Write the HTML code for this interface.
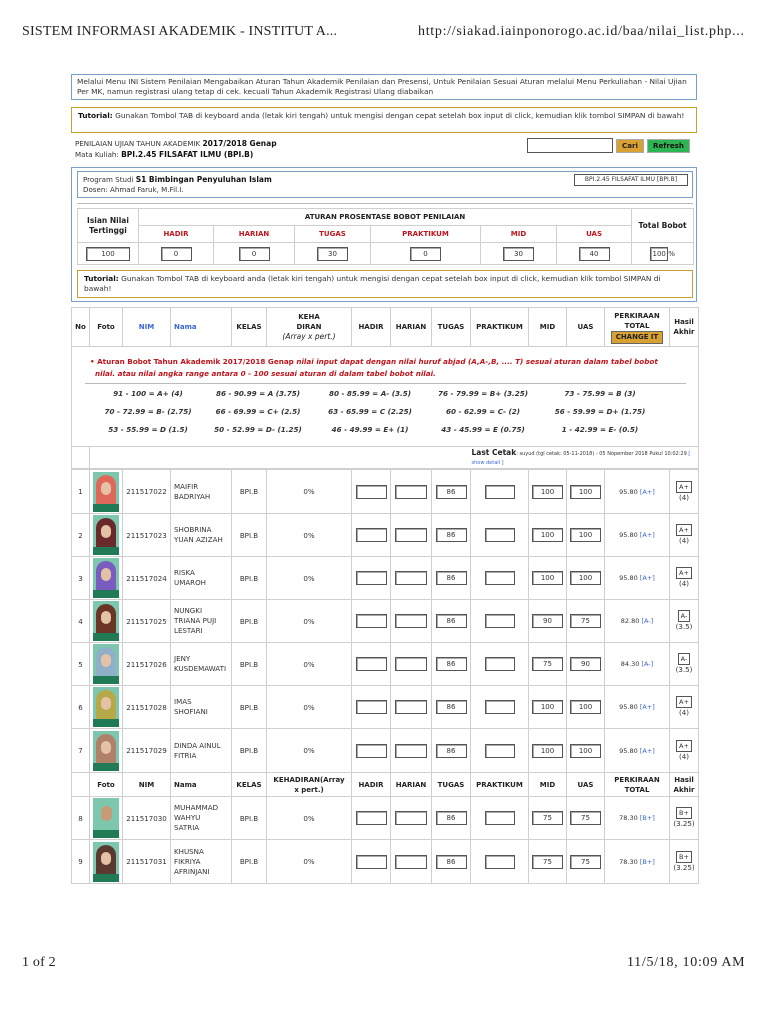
<!DOCTYPE html>
<html><head><meta charset="utf-8"><style>
*{margin:0;padding:0;box-sizing:border-box}
body{width:768px;height:1024px;background:#fff;position:relative;font-family:"DejaVu Sans","Liberation Sans",sans-serif;font-size:7.1px;color:#333;overflow:hidden}
.a{position:absolute}
.ser{font-family:"Liberation Serif",serif;font-size:14px;color:#222;letter-spacing:.2px}
.box{position:absolute;border:1px solid #7a9fc8}
.ybox{position:absolute;border:1px solid #c8a030;padding:3px 6px;line-height:10px;font-size:7.4px}
table{border-collapse:collapse;table-layout:fixed;position:absolute}
td,th{border:1px solid #cfcfcf;text-align:center;vertical-align:middle;overflow:hidden}
th{font-weight:bold;color:#222;font-size:7px;line-height:10px}
.red{color:#c0141c}
.in{display:inline-block;border:1px solid #555;box-shadow:inset 1px 1px 0 #aaa;height:14px;line-height:12px;font-size:7px;text-align:center;vertical-align:middle}
.ph{width:26px;height:40px;margin:0 auto;position:relative;background:#7cc7ae;overflow:hidden}
.ph .hj{position:absolute;left:3px;top:3px;width:20px;height:40px;border-radius:10px 10px 3px 3px}
.ph .fc{position:absolute;left:8px;top:10px;width:10px;height:13px;border-radius:5px;background:#e4c2a6}
.ph .bd{position:absolute;left:0;bottom:0;width:26px;height:8px;background:#1f7a55}
.hs{display:inline-block;border:1px solid #555;padding:0 2px;line-height:10px;font-size:6.5px}
.bl{color:#3a66d6}
.lg{position:absolute;font-weight:bold;font-style:italic;color:#333;font-size:7.2px;transform:translateX(-50%);white-space:nowrap}
</style></head><body>
<div class="a ser" style="left:22px;top:24px">SISTEM INFORMASI AKADEMIK - INSTITUT A...</div>
<div class="a ser" style="left:418px;top:24px;letter-spacing:.7px">http://siakad.iainponorogo.ac.id/baa/nilai_list.php...</div>

<div class="box" style="left:71px;top:74px;width:626px;height:26px;padding:2px 5px;line-height:10px;font-size:7.4px">Melalui Menu INI Sistem Penilaian Mengabaikan Aturan Tahun Akademik Penilaian dan Presensi, Untuk Penilaian Sesuai Aturan melalui Menu Perkuliahan - Nilai Ujian Per MK, namun registrasi ulang tetap di cek. kecuali Tahun Akademik Registrasi Ulang diabaikan</div>
<div class="ybox" style="left:71px;top:107px;width:626px;height:26px"><b style="color:#111">Tutorial:</b> Gunakan Tombol TAB di keyboard anda (letak kiri tengah) untuk mengisi dengan cepat setelah box input di click, kemudian klik tombol SIMPAN di bawah!</div>
<div class="a" style="left:75px;top:138px;line-height:11px">PENILAIAN UJIAN TAHUN AKADEMIK <b style="color:#111;font-size:7.5px">2017/2018 Genap</b><br>Mata Kuliah: <b style="color:#111;font-size:7.5px">BPI.2.45 FILSAFAT ILMU (BPI.B)</b></div>
<div class="a" style="left:527px;top:138px;width:86px;height:15px;border:1px solid #555"></div>
<div class="a" style="left:616px;top:139px;width:28px;height:14px;background:#d9a032;border:1px solid #aaa;font-weight:bold;text-align:center;line-height:12px;color:#222">Cari</div>
<div class="a" style="left:647px;top:139px;width:43px;height:14px;background:#2cb552;border:1px solid #aaa;font-weight:bold;text-align:center;line-height:12px;color:#111">Refresh</div>

<div class="box" style="left:71px;top:167px;width:626px;height:135px"></div>
<div class="box" style="left:77px;top:171px;width:616px;height:27px;padding:3px 5px;line-height:10px">Program Studi <b style="color:#111;font-size:7.5px">S1 Bimbingan Penyuluhan Islam</b><br>Dosen: Ahmad Faruk, M.Fil.I.</div>
<div class="a" style="left:574px;top:174px;width:114px;height:12px;border:1px solid #555;font-size:6px;line-height:10px;text-align:center;white-space:nowrap">BPI.2.45 FILSAFAT ILMU [BPI.B]</div>
<div class="a" style="left:77px;top:203px;width:616px;border-top:1px solid #bbb"></div>
<table style="left:77px;top:208px;width:616px">
<colgroup><col style="width:61px"><col style="width:75px"><col style="width:81px"><col style="width:76px"><col style="width:110px"><col style="width:76px"><col style="width:75px"><col style="width:62px"></colgroup>
<tr style="height:17px"><th rowspan="2" style="font-size:7.5px">Isian Nilai<br>Tertinggi</th><th colspan="6">ATURAN PROSENTASE BOBOT PENILAIAN</th><th rowspan="2" style="font-size:7.5px">Total Bobot</th></tr>
<tr style="height:17px"><th class="red">HADIR</th><th class="red">HARIAN</th><th class="red">TUGAS</th><th class="red">PRAKTIKUM</th><th class="red">MID</th><th class="red">UAS</th></tr>
<tr style="height:22px"><td><span class="in" style="width:44px">100</span></td><td><span class="in" style="width:31px">0</span></td><td><span class="in" style="width:31px">0</span></td><td><span class="in" style="width:31px">30</span></td><td><span class="in" style="width:31px">0</span></td><td><span class="in" style="width:31px">30</span></td><td><span class="in" style="width:31px">40</span></td><td><span class="in" style="width:18px">100</span>%</td></tr>
</table>
<div class="ybox" style="left:77px;top:270px;width:616px;height:28px"><b style="color:#111">Tutorial:</b> Gunakan Tombol TAB di keyboard anda (letak kiri tengah) untuk mengisi dengan cepat setelah box input di click, kemudian klik tombol SIMPAN di bawah!</div>

<table style="left:71px;top:307px;width:627px">
<colgroup><col style="width:18px"><col style="width:33px"><col style="width:48px"><col style="width:61px"><col style="width:35px"><col style="width:85px"><col style="width:39px"><col style="width:41px"><col style="width:39px"><col style="width:58px"><col style="width:38px"><col style="width:38px"><col style="width:65px"><col style="width:29px"></colgroup>
<tr style="height:39px"><th>No</th><th>Foto</th><th class="bl">NIM</th><th class="bl" style="text-align:left;padding-left:3px">Nama</th><th>KELAS</th><th>KEHA<br>DIRAN<br><i style="font-weight:normal;font-size:7.5px">(Array x pert.)</i></th><th>HADIR</th><th>HARIAN</th><th>TUGAS</th><th>PRAKTIKUM</th><th>MID</th><th>UAS</th><th>PERKIRAAN<br>TOTAL<br><span style="display:inline-block;background:#d9a032;border:1px solid #666;padding:1px 4px;line-height:9px">CHANGE IT</span></th><th>Hasil<br>Akhir</th></tr>
<tr style="height:100px"><td colspan="14" style="vertical-align:top;text-align:left;position:relative">
<div class="red" style="position:absolute;left:18px;top:9px;width:620px;font-weight:bold;font-style:italic;line-height:12px;font-size:7.2px;white-space:nowrap">• <span style="font-style:normal">Aturan Bobot Tahun Akademik 2017/2018 Genap</span> nilai input dapat dengan nilai huruf abjad (A,A-,B, .... T) sesuai aturan dalam tabel bobot<br>&nbsp;&nbsp;nilai. atau nilai angka range antara 0 - 100 sesuai aturan di dalam tabel bobot nilai.</div>
<div style="position:absolute;left:13px;top:36px;width:601px;border-top:1px solid #bbb"></div>
</td></tr>
<tr style="height:22px"><td></td><td colspan="8" style="border-right:none"></td><td colspan="5" style="text-align:left;padding-left:1px;line-height:8px;border-left:none;white-space:nowrap"><b style="font-size:7.5px;color:#222">Last Cetak</b><span style="font-size:5px">: suyud (tgl cetak: 05-11-2018) - 05 Nopember 2018 Pukul 10:02:29 <span class="bl">[<br>show detail ]</span></span></td></tr>
</table>
<div class="lg" style="left:148px;top:389px">91 - 100 = A+ (4)</div><div class="lg" style="left:258px;top:389px">86 - 90.99 = A (3.75)</div><div class="lg" style="left:370px;top:389px">80 - 85.99 = A- (3.5)</div><div class="lg" style="left:483px;top:389px">76 - 79.99 = B+ (3.25)</div><div class="lg" style="left:600px;top:389px">73 - 75.99 = B (3)</div>
<div class="lg" style="left:148px;top:407px">70 - 72.99 = B- (2.75)</div><div class="lg" style="left:258px;top:407px">66 - 69.99 = C+ (2.5)</div><div class="lg" style="left:370px;top:407px">63 - 65.99 = C (2.25)</div><div class="lg" style="left:483px;top:407px">60 - 62.99 = C- (2)</div><div class="lg" style="left:600px;top:407px">56 - 59.99 = D+ (1.75)</div>
<div class="lg" style="left:148px;top:425px">53 - 55.99 = D (1.5)</div><div class="lg" style="left:258px;top:425px">50 - 52.99 = D- (1.25)</div><div class="lg" style="left:370px;top:425px">46 - 49.99 = E+ (1)</div><div class="lg" style="left:483px;top:425px">43 - 45.99 = E (0.75)</div><div class="lg" style="left:600px;top:425px">1 - 42.99 = E- (0.5)</div>

<table style="left:71px;top:469px;width:627px">
<colgroup><col style="width:18px"><col style="width:33px"><col style="width:48px"><col style="width:61px"><col style="width:35px"><col style="width:85px"><col style="width:39px"><col style="width:41px"><col style="width:39px"><col style="width:58px"><col style="width:38px"><col style="width:38px"><col style="width:65px"><col style="width:29px"></colgroup>
<tr style="height:44px"><td>1</td><td><div class="ph"><div class="hj" style="background:#e0685a"></div><div class="fc"></div><div class="bd"></div></div></td><td>211517022</td><td style="text-align:left;padding-left:3px;line-height:10px">MAIFIR<br>BADRIYAH</td><td>BPI.B</td><td>0%</td><td><span class="in" style="width:31px"></span></td><td><span class="in" style="width:32px"></span></td><td><span class="in" style="width:31px">86</span></td><td><span class="in" style="width:30px"></span></td><td><span class="in" style="width:31px">100</span></td><td><span class="in" style="width:31px">100</span></td><td style="font-size:6.5px">95.80 <span class="bl">[A+]</span></td><td style="line-height:10px"><span class="hs">A+</span><br>(4)</td></tr>
<tr style="height:43px"><td>2</td><td><div class="ph"><div class="hj" style="background:#6a2a2a"></div><div class="fc"></div><div class="bd"></div></div></td><td>211517023</td><td style="text-align:left;padding-left:3px;line-height:10px">SHOBRINA<br>YUAN AZIZAH</td><td>BPI.B</td><td>0%</td><td><span class="in" style="width:31px"></span></td><td><span class="in" style="width:32px"></span></td><td><span class="in" style="width:31px">86</span></td><td><span class="in" style="width:30px"></span></td><td><span class="in" style="width:31px">100</span></td><td><span class="in" style="width:31px">100</span></td><td style="font-size:6.5px">95.80 <span class="bl">[A+]</span></td><td style="line-height:10px"><span class="hs">A+</span><br>(4)</td></tr>
<tr style="height:43px"><td>3</td><td><div class="ph"><div class="hj" style="background:#7a5cc0"></div><div class="fc"></div><div class="bd"></div></div></td><td>211517024</td><td style="text-align:left;padding-left:3px;line-height:10px">RISKA<br>UMAROH</td><td>BPI.B</td><td>0%</td><td><span class="in" style="width:31px"></span></td><td><span class="in" style="width:32px"></span></td><td><span class="in" style="width:31px">86</span></td><td><span class="in" style="width:30px"></span></td><td><span class="in" style="width:31px">100</span></td><td><span class="in" style="width:31px">100</span></td><td style="font-size:6.5px">95.80 <span class="bl">[A+]</span></td><td style="line-height:10px"><span class="hs">A+</span><br>(4)</td></tr>
<tr style="height:43px"><td>4</td><td><div class="ph"><div class="hj" style="background:#6b3526"></div><div class="fc"></div><div class="bd"></div></div></td><td>211517025</td><td style="text-align:left;padding-left:3px;line-height:10px">NUNGKI<br>TRIANA PUJI<br>LESTARI</td><td>BPI.B</td><td>0%</td><td><span class="in" style="width:31px"></span></td><td><span class="in" style="width:32px"></span></td><td><span class="in" style="width:31px">86</span></td><td><span class="in" style="width:30px"></span></td><td><span class="in" style="width:31px">90</span></td><td><span class="in" style="width:31px">75</span></td><td style="font-size:6.5px">82.80 <span class="bl">[A-]</span></td><td style="line-height:10px"><span class="hs">A-</span><br>(3.5)</td></tr>
<tr style="height:43px"><td>5</td><td><div class="ph"><div class="hj" style="background:#8fb0c8"></div><div class="fc"></div><div class="bd"></div></div></td><td>211517026</td><td style="text-align:left;padding-left:3px;line-height:10px">JENY<br>KUSDEMAWATI</td><td>BPI.B</td><td>0%</td><td><span class="in" style="width:31px"></span></td><td><span class="in" style="width:32px"></span></td><td><span class="in" style="width:31px">86</span></td><td><span class="in" style="width:30px"></span></td><td><span class="in" style="width:31px">75</span></td><td><span class="in" style="width:31px">90</span></td><td style="font-size:6.5px">84.30 <span class="bl">[A-]</span></td><td style="line-height:10px"><span class="hs">A-</span><br>(3.5)</td></tr>
<tr style="height:43px"><td>6</td><td><div class="ph"><div class="hj" style="background:#b7a848"></div><div class="fc"></div><div class="bd"></div></div></td><td>211517028</td><td style="text-align:left;padding-left:3px;line-height:10px">IMAS<br>SHOFIANI</td><td>BPI.B</td><td>0%</td><td><span class="in" style="width:31px"></span></td><td><span class="in" style="width:32px"></span></td><td><span class="in" style="width:31px">86</span></td><td><span class="in" style="width:30px"></span></td><td><span class="in" style="width:31px">100</span></td><td><span class="in" style="width:31px">100</span></td><td style="font-size:6.5px">95.80 <span class="bl">[A+]</span></td><td style="line-height:10px"><span class="hs">A+</span><br>(4)</td></tr>
<tr style="height:44px"><td>7</td><td><div class="ph"><div class="hj" style="background:#b08068"></div><div class="fc"></div><div class="bd"></div></div></td><td>211517029</td><td style="text-align:left;padding-left:3px;line-height:10px">DINDA AINUL<br>FITRIA</td><td>BPI.B</td><td>0%</td><td><span class="in" style="width:31px"></span></td><td><span class="in" style="width:32px"></span></td><td><span class="in" style="width:31px">86</span></td><td><span class="in" style="width:30px"></span></td><td><span class="in" style="width:31px">100</span></td><td><span class="in" style="width:31px">100</span></td><td style="font-size:6.5px">95.80 <span class="bl">[A+]</span></td><td style="line-height:10px"><span class="hs">A+</span><br>(4)</td></tr>
<tr style="height:24px"><th></th><th>Foto</th><th>NIM</th><th style="text-align:left;padding-left:3px">Nama</th><th>KELAS</th><th>KEHADIRAN(Array<br>x pert.)</th><th>HADIR</th><th>HARIAN</th><th>TUGAS</th><th>PRAKTIKUM</th><th>MID</th><th>UAS</th><th>PERKIRAAN<br>TOTAL</th><th>Hasil<br>Akhir</th></tr>
<tr style="height:43px"><td>8</td><td><div class="ph"><div class="hj" style="background:#7cc7ae"></div><div class="fc" style="top:8px;width:11px;height:15px;background:#c89a78"></div><div class="bd"></div></div></td><td>211517030</td><td style="text-align:left;padding-left:3px;line-height:10px">MUHAMMAD<br>WAHYU<br>SATRIA</td><td>BPI.B</td><td>0%</td><td><span class="in" style="width:31px"></span></td><td><span class="in" style="width:32px"></span></td><td><span class="in" style="width:31px">86</span></td><td><span class="in" style="width:30px"></span></td><td><span class="in" style="width:31px">75</span></td><td><span class="in" style="width:31px">75</span></td><td style="font-size:6.5px">78.30 <span class="bl">[B+]</span></td><td style="line-height:10px"><span class="hs">B+</span><br>(3.25)</td></tr>
<tr style="height:44px"><td>9</td><td><div class="ph"><div class="hj" style="background:#5a3a30"></div><div class="fc"></div><div class="bd"></div></div></td><td>211517031</td><td style="text-align:left;padding-left:3px;line-height:10px">KHUSNA<br>FIKRIYA<br>AFRINJANI</td><td>BPI.B</td><td>0%</td><td><span class="in" style="width:31px"></span></td><td><span class="in" style="width:32px"></span></td><td><span class="in" style="width:31px">86</span></td><td><span class="in" style="width:30px"></span></td><td><span class="in" style="width:31px">75</span></td><td><span class="in" style="width:31px">75</span></td><td style="font-size:6.5px">78.30 <span class="bl">[B+]</span></td><td style="line-height:10px"><span class="hs">B+</span><br>(3.25)</td></tr>
</table>

<div class="a ser" style="left:22px;top:955px">1 of 2</div>
<div class="a ser" style="left:627px;top:955px;letter-spacing:.7px">11/5/18, 10:09 AM</div>
</body></html>
